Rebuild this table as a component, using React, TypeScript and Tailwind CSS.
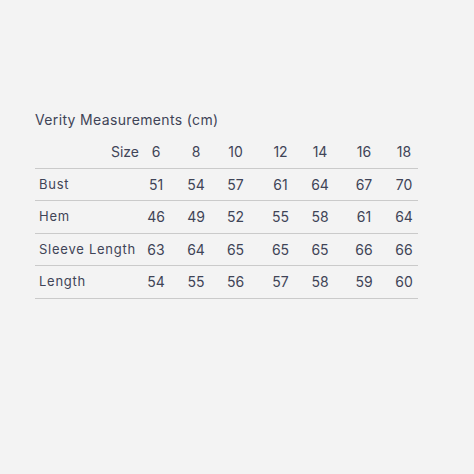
const sizes = ["6", "8", "10", "12", "14", "16", "18"];

const rows: { label: string; values: number[] }[] = [
  { label: "Bust", values: [51, 54, 57, 61, 64, 67, 70] },
  { label: "Hem", values: [46, 49, 52, 55, 58, 61, 64] },
  { label: "Sleeve Length", values: [63, 64, 65, 65, 65, 66, 66] },
  { label: "Length", values: [54, 55, 56, 57, 58, 59, 60] },
];

// 列ごとの微調整（中心位置を参照に合わせる）
const colPad = ["pr-[3px]", "", "pr-[3px]", "pl-[3px]", "pr-[2px]", "pl-[2px]", ""];

const gridCols = "grid grid-cols-[104px_37px_40px_42px_42px_42px_42px_40px] items-center";

export default function App() {
  return (
    <div className="w-[474px] h-[474px] bg-[#f3f3f3] text-[#3f4457] font-['Inter','Open_Sans',sans-serif]">
      <div className="pt-[110px] pl-[35px]">
        <h1 className="text-[14px] leading-[20px] tracking-[0.35px]">Verity Measurements (cm)</h1>

        <div className="mt-[6px] w-[383px]">
          {/* ヘッダー行 */}
          <div className="h-[32.5px] border-b-[1.5px] border-[#cacaca]">
            <div className={`${gridCols} h-full`}>
              <div className="text-right text-[14px]">Size</div>
              {sizes.map((s, i) => (
                <div key={s} className={`text-center text-[14px] ${colPad[i]}`}>
                  {s}
                </div>
              ))}
            </div>
          </div>

          {rows.map((row) => (
            <div key={row.label} className="h-[32.5px] border-b-[1.5px] border-[#cacaca]">
              <div className={`${gridCols} h-full`}>
                <div className="pl-1 text-[13px] tracking-[0.75px] whitespace-nowrap">{row.label}</div>
                {row.values.map((v, i) => (
                  <div key={i} className={`text-center text-[14px] ${colPad[i]}`}>
                    {v}
                  </div>
                ))}
              </div>
            </div>
          ))}
        </div>
      </div>
    </div>
  );
}
